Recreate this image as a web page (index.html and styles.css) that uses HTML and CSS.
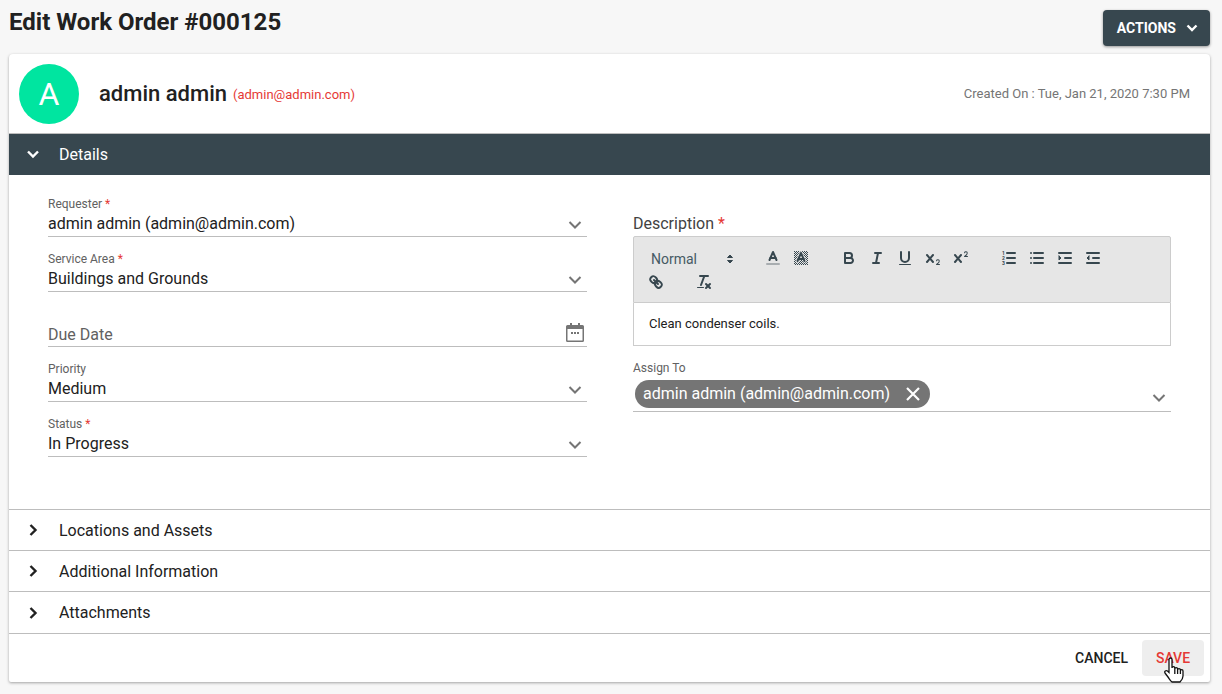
FILE: index.html
```html
<!DOCTYPE html>
<html lang="en">
<head>
    <meta charset="UTF-8">
    <title>Edit Work Order</title>
    <link rel="stylesheet" href="styles.css">
</head>
<body>

    <div class="page-head">
        <h1>Edit Work Order #000125</h1>
        <button class="actions-btn">ACTIONS
            <svg class="chev" width="12" height="8" viewBox="0 0 12 8"><path d="M1.5 1.5 6 6l4.500-4.500"/></svg>
        </button>
    </div>

    <div class="card">
        <div class="card-head">
            <div class="avatar">A</div>
            <div class="user-name">admin admin</div>
            <div class="user-mail">(admin@admin.com)</div>
            <div class="created">Created On : Tue, Jan 21, 2020 7:30 PM</div>
        </div>

        <div class="section section-open">
            <svg class="chev" width="14" height="9" viewBox="0 0 14 9"><path d="M2 1.500 7 6.500l5-5"/></svg>
            <span>Details</span>
        </div>

        <div class="form">
            <div class="col">
                <div class="field">
                    <label>Requester <em>*</em></label>
                    <div class="value">admin admin (admin@admin.com)
                        <svg class="arrow" width="14" height="8" viewBox="0 0 14 8"><path d="M1.500 1 7 6.500 12.500 1"/></svg>
                    </div>
                </div>
                <div class="field">
                    <label>Service Area <em>*</em></label>
                    <div class="value">Buildings and Grounds
                        <svg class="arrow" width="14" height="8" viewBox="0 0 14 8"><path d="M1.500 1 7 6.500 12.500 1"/></svg>
                    </div>
                </div>
                <div class="field">
                    <div class="value placeholder"><span class="due">Due Date</span>
                        <svg class="calendar" width="18" height="19" viewBox="0 0 18 19">
                            <path d="M4 0h2v2h6V0h2v2h2.500A1.500 1.500 0 0 1 18 3.500v14a1.500 1.500 0 0 1-1.500 1.500h-15A1.500 1.500 0 0 1 0 17.500v-14A1.500 1.500 0 0 1 1.500 2H4z"/>
                            <rect x="1.500" y="6" width="15" height="11.500" fill="#fff"/>
                            <rect x="5" y="9" width="2" height="2"/><rect x="8" y="9" width="2" height="2"/><rect x="11" y="9" width="2" height="2"/>
                        </svg>
                    </div>
                </div>
                <div class="field">
                    <label>Priority</label>
                    <div class="value">Medium
                        <svg class="arrow" width="14" height="8" viewBox="0 0 14 8"><path d="M1.500 1 7 6.500 12.500 1"/></svg>
                    </div>
                </div>
                <div class="field">
                    <label>Status <em>*</em></label>
                    <div class="value">In Progress
                        <svg class="arrow" width="14" height="8" viewBox="0 0 14 8"><path d="M1.500 1 7 6.500 12.500 1"/></svg>
                    </div>
                </div>
            </div>

            <div class="col col-right">
                <div class="desc-label">Description <em>*</em></div>
                <div class="toolbar">
                    <div class="tool-row">
                        <div class="picker">Normal
                            <svg width="18" height="18" viewBox="0 0 18 18"><polygon class="fill" points="6.500 10.500 9 13 11.500 10.500"/><polygon class="fill" points="6.500 7.500 9 5 11.500 7.500"/></svg>
                        </div>
                        <div class="tool-group">
                            <button class="tool"><svg width="18" height="18" viewBox="0 0 18 18"><line class="label" x1="3" x2="15" y1="15" y2="15"/><polyline points="5.500 11 9 3 12.500 11"/><line x1="11.630" x2="6.380" y1="9" y2="9"/></svg></button>
                            <button class="tool"><svg width="18" height="18" viewBox="0 0 18 18"><defs><pattern id="hatch" width="2" height="2" patternUnits="userSpaceOnUse"><rect class="dot" width="1" height="1"/><rect class="dot" x="1" y="1" width="1" height="1"/></pattern></defs><rect x="2" y="2" width="14" height="14" fill="url(#hatch)" stroke="none"/><polyline class="halo" points="5.500 12 9 4 12.500 12"/><polyline points="5.500 12 9 4 12.500 12"/><line x1="11.630" x2="6.380" y1="10" y2="10"/></svg></button>
                        </div>
                        <div class="tool-group">
                            <button class="tool"><svg width="18" height="18" viewBox="0 0 18 18"><path d="M5 4h4.500A2.500 2.500 0 0 1 12 6.500 2.500 2.500 0 0 1 9.500 9H5z"/><path d="M5 9h5.500A2.500 2.500 0 0 1 13 11.500 2.500 2.500 0 0 1 10.500 14H5z"/></svg></button>
                            <button class="tool"><svg width="18" height="18" viewBox="0 0 18 18"><line x1="7" x2="13" y1="4" y2="4"/><line x1="5" x2="11" y1="14" y2="14"/><line x1="8" x2="10" y1="14" y2="4"/></svg></button>
                            <button class="tool"><svg width="18" height="18" viewBox="0 0 18 18"><path d="M5 3v6a4 4 0 0 0 4 4 4 4 0 0 0 4-4V3"/><rect class="fill" x="3" y="15" width="12" height="1" rx=".5"/></svg></button>
                            <button class="tool"><svg width="18" height="18" viewBox="0 0 18 18"><path class="fill" d="M15.500 15H13.861a3.858 3.858 0 0 0 1.914-2.975 1.800 1.800 0 0 0-1.600-1.751A1.921 1.921 0 0 0 12.021 11.700a.5.5 0 1 0 .957.291.914.914 0 0 1 1.053-.725.81.81 0 0 1 .744.762c0 1.076-1.170 1.870-1.940 2.431A1.456 1.456 0 0 0 12 15.500a.5.5 0 0 0 .5.5h3a.5.5 0 0 0 0-1z"/><path class="fill" d="M9.651 5.241a1 1 0 0 0-1.410.108L6 7.964 3.759 5.349a1 1 0 1 0-1.519 1.300L4.683 9.500 2.241 12.350a1 1 0 1 0 1.519 1.300L6 11.036l2.241 2.616a1 1 0 0 0 1.519-1.300L7.317 9.500l2.442-2.849a1 1 0 0 0-.108-1.410z"/></svg></button>
                            <button class="tool"><svg width="18" height="18" viewBox="0 0 18 18"><path class="fill" d="M15.500 7H13.861a4.015 4.015 0 0 0 1.914-2.975 1.800 1.800 0 0 0-1.600-1.751A1.922 1.922 0 0 0 12.021 3.700a.5.5 0 1 0 .957.291.917.917 0 0 1 1.053-.725.81.81 0 0 1 .744.762c0 1.077-1.164 1.925-1.934 2.486A1.423 1.423 0 0 0 12 7.500a.5.5 0 0 0 .5.5h3a.5.5 0 0 0 0-1z"/><path class="fill" d="M9.651 5.241a1 1 0 0 0-1.410.108L6 7.964 3.759 5.349a1 1 0 1 0-1.519 1.300L4.683 9.500 2.241 12.350a1 1 0 1 0 1.519 1.300L6 11.036l2.241 2.616a1 1 0 0 0 1.519-1.300L7.317 9.500l2.442-2.849a1 1 0 0 0-.108-1.410z"/></svg></button>
                        </div>
                        <div class="tool-group">
                            <button class="tool"><svg width="18" height="18" viewBox="0 0 18 18"><line x1="7" x2="15" y1="4" y2="4"/><line x1="7" x2="15" y1="9" y2="9"/><line x1="7" x2="15" y1="14" y2="14"/><text class="num" x="2" y="6">1</text><text class="num" x="2" y="11">2</text><text class="num" x="2" y="16">3</text></svg></button>
                            <button class="tool"><svg width="18" height="18" viewBox="0 0 18 18"><line x1="6" x2="15" y1="4" y2="4"/><line x1="6" x2="15" y1="9" y2="9"/><line x1="6" x2="15" y1="14" y2="14"/><line x1="3" x2="3" y1="4" y2="4"/><line x1="3" x2="3" y1="9" y2="9"/><line x1="3" x2="3" y1="14" y2="14"/></svg></button>
                            <button class="tool"><svg width="18" height="18" viewBox="0 0 18 18"><line x1="3" x2="15" y1="14" y2="14"/><line x1="3" x2="15" y1="4" y2="4"/><line x1="9" x2="15" y1="9" y2="9"/><polyline class="fill" points="3 7 3 11 5 9 3 7"/></svg></button>
                            <button class="tool"><svg width="18" height="18" viewBox="0 0 18 18"><line x1="3" x2="15" y1="14" y2="14"/><line x1="3" x2="15" y1="4" y2="4"/><line x1="9" x2="15" y1="9" y2="9"/><polyline class="fill" points="5 7 5 11 3 9 5 7"/></svg></button>
                        </div>
                    </div>
                    <div class="tool-row">
                        <button class="tool"><svg width="18" height="18" viewBox="0 0 18 18"><line x1="7" x2="11" y1="7" y2="11"/><path d="M8.900 4.577a3.476 3.476 0 0 1 .36 4.679A3.476 3.476 0 0 1 4.577 8.900C3.185 7.500 2.035 6.400 4.217 4.217S7.500 3.185 8.900 4.577z"/><path d="M13.423 9.100a3.476 3.476 0 0 0-4.679-.36 3.476 3.476 0 0 0 .36 4.679c1.392 1.392 2.500 2.542 4.679.36S14.815 10.500 13.423 9.100z"/></svg></button>
                        <div class="tool-group">
                            <button class="tool"><svg width="18" height="18" viewBox="0 0 18 18"><line x1="5" x2="13" y1="3" y2="3"/><line x1="6" x2="9.350" y1="12" y2="3"/><line x1="11" x2="15" y1="11" y2="15"/><line x1="15" x2="11" y1="11" y2="15"/><rect class="fill" x="2" y="14" width="7" height="1" rx=".5"/></svg></button>
                        </div>
                    </div>
                </div>
                <div class="editor">Clean condenser coils.</div>
                <div class="assign">
                    <label>Assign To</label>
                    <div class="assign-row">
                        <div class="chip">admin admin (admin@admin.com)
                            <svg width="16" height="16" viewBox="0 0 16 16"><path d="M2 2l12 12M14 2L2 14"/></svg>
                        </div>
                        <svg class="arrow" width="14" height="8" viewBox="0 0 14 8"><path d="M1.500 1 7 6.500 12.500 1"/></svg>
                    </div>
                </div>
            </div>
        </div>

        <div class="section">
            <svg class="chev" width="9" height="14" viewBox="0 0 9 14"><path d="M2 2l5 5-5 5"/></svg>
            <span>Locations and Assets</span>
        </div>
        <div class="section">
            <svg class="chev" width="9" height="14" viewBox="0 0 9 14"><path d="M2 2l5 5-5 5"/></svg>
            <span>Additional Information</span>
        </div>
        <div class="section section-last">
            <svg class="chev" width="9" height="14" viewBox="0 0 9 14"><path d="M2 2l5 5-5 5"/></svg>
            <span>Attachments</span>
        </div>

        <div class="card-foot">
            <button class="foot-btn">CANCEL</button>
            <button class="foot-btn save-btn">SAVE
                <svg class="hand" width="20" height="26" viewBox="0 0 20 26"><path d="M5 2.500a1.500 1.500 0 0 1 3 0V11a1.400 1.400 0 0 1 2.800 0v1a1.400 1.400 0 0 1 2.800 0v1a1.400 1.400 0 0 1 2.800 0v1a1.300 1.300 0 0 1 2.600 0v5c0 3-1.500 4.500-3 6H8c-1.500-1-2.500-3-4-5L1 16c-1-1.500 1-3 2.500-2L5 15.500z"/><path d="M10.800 12v5M13.600 13v4M16.400 14v3"/></svg>
            </button>
        </div>
    </div>

</body>
</html>
```

FILE: styles.css
```css
body {
    margin: 0;
    height: 694px;
    overflow: hidden;
    font-family: Roboto, sans-serif;
    background-color: #f7f7f7;
    color: #212121;
}
button {
    font-family: Roboto, sans-serif;
    border: none;
    background: none;
    cursor: pointer;
}
em {
    font-style: normal;
    color: #e53935;
}
.page-head {
    display: flex;
    justify-content: space-between;
    align-items: flex-start;
    height: 54px;
    padding: 10px 12px 0 9px;
    box-sizing: border-box;
}
h1 {
    margin: -1px 0 0;
    font-size: 24px;
    line-height: 26px;
    font-weight: 700;
}
.actions-btn {
    display: flex;
    align-items: center;
    gap: 10px;
    height: 36px;
    padding: 0 12px 0 14px;
    border-radius: 4px;
    font-size: 14px;
    font-weight: 700;
    color: #fff;
    background-color: #37474f;
    box-shadow: 0 1px 3px rgba(0,0,0,0.4);
}
.chev path {
    fill: none;
    stroke: currentColor;
    stroke-width: 2.4;
}
.card {
    width: 1201px;
    height: 628px;
    margin-left: 9px;
    background-color: #fff;
    border-radius: 4px 4px 2px 2px;
    box-shadow: 0 1px 3px rgba(0,0,0,0.35);
}
.card-head {
    display: flex;
    align-items: center;
    height: 79px;
    padding: 0 20px 0 10px;
    border-bottom: 1px solid #bdbdbd;
}
.avatar {
    width: 60px;
    height: 60px;
    border-radius: 50%;
    background-color: #00e5a0;
    color: #fff;
    font-size: 32px;
    line-height: 60px;
    text-align: center;
}
.user-name {
    margin-left: 20px;
    font-size: 22px;
    font-weight: 500;
}
.user-mail {
    margin: 2px 0 0 6px;
    font-size: 13px;
    color: #e53935;
}
.created {
    margin-left: auto;
    font-size: 13px;
    color: #757575;
}
.section {
    display: flex;
    align-items: center;
    height: 40px;
    padding-left: 17px;
    font-size: 16px;
    border-bottom: 1px solid #bdbdbd;
}
.section svg {
    width: 14px;
    margin-right: 19px;
}
.section-open {
    height: 41px;
    border-bottom: none;
    color: #fff;
    background-color: #37474f;
}
.section-last {
    height: 41px;
}
.form {
    display: flex;
    gap: 46px;
    height: 335px;
    padding: 7px 39px 0;
    border-bottom: 1px solid #bdbdbd;
    box-sizing: border-box;
}
.col {
    width: 539px;
}
.col-right {
    width: 538px;
    padding-top: 28px;
}
.field {
    display: flex;
    flex-direction: column;
    justify-content: flex-end;
    height: 55px;
    box-sizing: border-box;
}
label {
    display: block;
    margin-bottom: -1px;
    font-size: 12px;
    line-height: 14px;
    color: #616161;
}
.value {
    display: flex;
    align-items: center;
    justify-content: space-between;
    height: 26px;
    padding-right: 5px;
    font-size: 16px;
    border-bottom: 1px solid #bdbdbd;
}
.placeholder {
    color: #616161;
}
.due {
    padding-top: 2px;
}
.arrow {
    margin-top: 3px;
}
.arrow path {
    fill: none;
    stroke: #757575;
    stroke-width: 2;
}
.calendar {
    margin: -1px -2px 0 0;
    fill: #757575;
}
.desc-label {
    height: 26px;
    line-height: 28px;
    font-size: 16px;
    color: #424242;
}
.toolbar {
    height: 67px;
    padding: 9px 8px 0;
    box-sizing: border-box;
    background-color: #e6e6e6;
    border: 1px solid #ccc;
    border-radius: 2px 2px 0 0;
}
.tool-row {
    display: flex;
    height: 24px;
}
.picker {
    display: flex;
    align-items: center;
    justify-content: space-between;
    width: 97px;
    height: 25px;
    padding: 0 0 0 9px;
    box-sizing: border-box;
    font-size: 14px;
    color: #455a64;
}
.tool-group {
    display: flex;
    margin-left: 20px;
}
.tool {
    display: flex;
    align-items: center;
    justify-content: center;
    width: 28px;
    height: 24px;
    padding: 0;
}
.tool svg {
    fill: none;
    stroke: #37474f;
    stroke-width: 2;
    stroke-linecap: round;
    stroke-linejoin: round;
}
.picker .fill, .tool .fill {
    fill: #37474f;
    stroke: none;
}
.picker .fill {
    stroke: #37474f;
    stroke-width: 1;
}
.tool .dot {
    fill: #37474f;
    stroke: none;
}
.tool .halo {
    stroke: #e6e6e6;
    stroke-width: 3.5;
}
.tool .label {
    stroke: #a8adb0;
}
.tool .num {
    font-size: 5px;
    font-weight: 700;
    fill: #37474f;
    stroke: none;
}
.tool .fill[points] {
    stroke: #37474f;
    stroke-width: 1;
}
.editor {
    height: 43px;
    padding: 0 15px;
    box-sizing: border-box;
    line-height: 41px;
    font-size: 13px;
    color: #212121;
    background-color: #fff;
    border: 1px solid #ccc;
    border-top: none;
}
.assign {
    margin-top: 15px;
}
.assign-row {
    display: flex;
    justify-content: space-between;
    height: 38px;
    padding: 6px 5px 0 2px;
    box-sizing: border-box;
    border-bottom: 1px solid #bdbdbd;
}
.assign-row .arrow {
    margin-top: 14px;
}
.chip {
    display: flex;
    align-items: center;
    gap: 15px;
    height: 28px;
    padding: 0 9px 2px 8px;
    box-sizing: border-box;
    border-radius: 14px;
    font-size: 16px;
    color: #fff;
    background-color: #757575;
}
.chip svg {
    margin-top: 2px;
}
.chip path {
    fill: none;
    stroke: #fff;
    stroke-width: 2.2;
}
.card-foot {
    display: flex;
    justify-content: flex-end;
    gap: 6px;
    padding: 6px 6px 0 0;
}
.foot-btn {
    position: relative;
    height: 36px;
    padding: 0 8px;
    border-radius: 4px;
    font-size: 14px;
    font-weight: 500;
    color: #212121;
}
.save-btn {
    width: 62px;
    color: #e53935;
    background-color: #eee;
}
.hand {
    position: absolute;
    left: 22px;
    top: 17px;
    fill: #fff;
    stroke: #111;
    stroke-width: 1.300;
}
```
